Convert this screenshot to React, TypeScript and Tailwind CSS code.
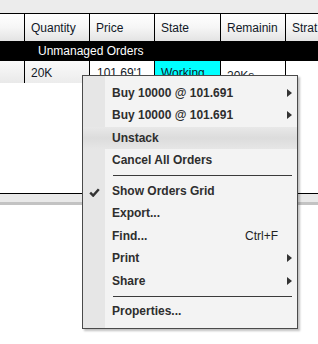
import React from 'react';

type MenuEntry =
  | { type: 'item'; label: string; shortcut?: string; submenu?: boolean; checked?: boolean; active?: boolean }
  | { type: 'separator' };

const menu: MenuEntry[] = [
  { type: 'item', label: 'Buy 10000 @ 101.691', submenu: true },
  { type: 'item', label: 'Buy 10000 @ 101.691', submenu: true },
  { type: 'item', label: 'Unstack', active: true },
  { type: 'item', label: 'Cancel All Orders' },
  { type: 'separator' },
  { type: 'item', label: 'Show Orders Grid', checked: true },
  { type: 'item', label: 'Export...' },
  { type: 'item', label: 'Find...', shortcut: 'Ctrl+F' },
  { type: 'item', label: 'Print', submenu: true },
  { type: 'item', label: 'Share', submenu: true },
  { type: 'separator' },
  { type: 'item', label: 'Properties...' },
];

const headerCell =
  'h-full flex items-center pl-[6px] border-r border-black bg-gradient-to-b from-white via-[#f6f6f6] to-[#e3e3e3] whitespace-nowrap overflow-hidden';

function ContextMenu() {
  return (
    <div className="absolute left-[82px] top-[75px] w-[216px] border border-[#4a4a4a] py-[5.5px] bg-[linear-gradient(to_right,#e6e6e6_22px,#f3f3f3_22px)] shadow-[2px_2px_2px_rgba(0,0,0,0.25)]">
      {menu.map((entry, i) =>
        entry.type === 'separator' ? (
          <div key={i} className="h-[8px] flex items-center pl-[30px] pr-[5px]">
            <div className="h-px w-full bg-[#3a3a3a]" />
          </div>
        ) : (
          <div
            key={i}
            className={
              'relative h-[22.5px] flex items-center pl-[29px] pr-[5px] text-[12px] text-[#2e2e2e] ' +
              (entry.active ? 'bg-[linear-gradient(to_bottom,#e8e8e8,#dcdcdc_50%,#e6e6e6)]' : '')
            }
          >
            {entry.checked && (
              <svg className="absolute left-[6px] top-[8px]" width="11" height="9" viewBox="0 0 11 9">
                <path d="M1.2 4.6 L4.2 7.6 L9.8 1.2" fill="none" stroke="#333" strokeWidth="2.4" />
              </svg>
            )}
            <span className="flex-1 font-bold whitespace-nowrap">{entry.label}</span>
            {entry.shortcut && <span className="mr-[9px] text-[#222]">{entry.shortcut}</span>}
            <span className="w-[5px] flex items-center">
              {entry.submenu && (
                <span className="block w-0 h-0 border-y-[4px] border-y-transparent border-l-[5px] border-l-[#333]" />
              )}
            </span>
          </div>
        )
      )}
    </div>
  );
}

export default function App() {
  return (
    <div className="relative w-[318px] h-[344px] overflow-hidden bg-white font-['Liberation_Sans',Arial,sans-serif] text-[12px] text-[#111827]">
      <div className="h-[13px] bg-[#ececec]" />

      {/* column headers */}
      <div className="flex h-[28px] border-t border-black">
        <div className={headerCell + ' w-[25px]'} />
        <div className={headerCell + ' w-[65px]'}>Quantity</div>
        <div className={headerCell + ' w-[65px]'}>Price</div>
        <div className={headerCell + ' w-[66px]'}>State</div>
        <div className={headerCell + ' w-[65px]'}>Remainin</div>
        <div className={headerCell + ' flex-1 border-r-0'}>Strat</div>
      </div>

      {/* group row */}
      <div className="h-[20px] bg-black text-white flex items-center pl-[38px]">Unmanaged Orders</div>

      {/* order row */}
      <div className="flex h-[22px]">
        <div className="w-[25px] border-r border-black bg-gradient-to-b from-[#fafafa] to-[#e9e9e9]" />
        <div className="w-[65px] border-r border-black bg-gradient-to-b from-[#fafafa] to-[#ececec] flex items-center pl-[6px] pt-[1px]">
          20K
        </div>
        <div className="w-[65px] border-r border-black flex items-center pl-[7px] pt-[1px]">101.69'1</div>
        <div className="w-[66px] border-r border-black bg-[#00ffff] flex items-center pl-[6px] pt-[1px]">Working</div>
        <div className="w-[65px] border-r border-black flex items-center pl-[6px] pt-[7px]">20Ks</div>
        <div className="flex-1" />
      </div>

      {/* lower pane edge */}
      <div className="mt-[110px] border-t border-black h-[9px] bg-[#e9e9e9]" />
      <div className="h-[3px] bg-[#c3c3c3]" />

      <ContextMenu />
    </div>
  );
}
